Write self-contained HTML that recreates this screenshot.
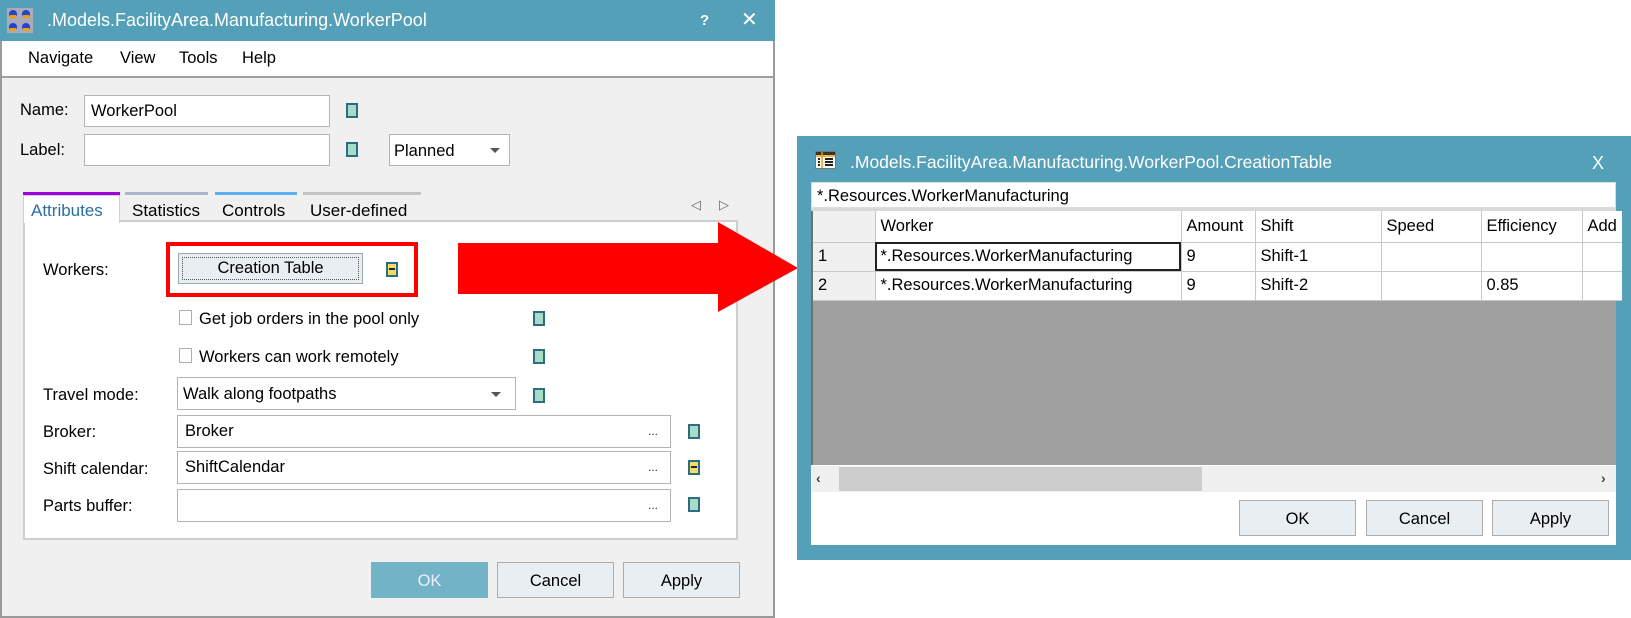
<!DOCTYPE html>
<html><head><meta charset="utf-8"><style>
*{box-sizing:border-box;margin:0;padding:0}
body{width:1631px;height:618px;background:#fff;position:relative;overflow:hidden;font-family:"Liberation Sans",sans-serif;font-size:16.5px;color:#000}
.a{position:absolute}
.t{position:absolute;white-space:nowrap;line-height:1}
.inp{position:absolute;background:#fff;border:1px solid #b4b4b4}
.sq{position:absolute;width:12px;height:15px;background:#a8dcc8;border:2px solid #2d6d80}
.sqy{position:absolute;width:12px;height:15px;background:#f4dc6a;border:2px solid #2d6d80}
.sqy:after{content:"";position:absolute;left:1px;top:4px;width:6px;height:2px;background:#223}
.btn{position:absolute;background:#e9eef2;border:1px solid #acacac;text-align:center;font-size:16.5px}
.cb{position:absolute;width:13px;height:15px;border:1px solid #adadad;background:#fff}
.dots{position:absolute;right:12px;top:8px;font-size:12px;color:#333}
.arr{position:absolute;width:0;height:0;border-left:5px solid transparent;border-right:5px solid transparent;border-top:5px solid #555}
td{border-right:1px solid #c8c8c8;border-bottom:1px solid #c8c8c8;padding:0 5px;font-size:16.5px;height:29px;white-space:nowrap;overflow:hidden}
</style></head><body>
<!-- left dialog -->
<div class="a" style="left:0;top:0;width:775px;height:618px;background:#f0f0f0;border:2px solid #9a9a9a;border-top:none"></div>
<div class="a" style="left:0;top:0;width:775px;height:41px;background:#55a0b9"></div>
<svg class="a" style="left:7px;top:8px" width="26" height="25"><rect width="26" height="25" fill="#aab"/><g fill="#2244cc"><circle cx="6" cy="6" r="4"/><circle cx="19" cy="6" r="4"/><circle cx="6" cy="19" r="4"/><circle cx="19" cy="19" r="4"/></g><g fill="#f0a000"><rect x="3" y="7" width="6" height="3"/><rect x="16" y="7" width="6" height="3"/><rect x="3" y="20" width="6" height="3"/><rect x="16" y="20" width="6" height="3"/></g></svg>
<div class="t" style="left:47px;top:11px;color:#fff;font-size:18px">.Models.FacilityArea.Manufacturing.WorkerPool</div>
<div class="t" style="left:700px;top:13px;color:#fff;font-size:15px;font-weight:bold">?</div>
<div class="t" style="left:741px;top:10px;color:#fff;font-size:20px">✕</div>
<div class="a" style="left:2px;top:41px;width:771px;height:37px;background:#fff;border-bottom:2px solid #a0a0a0"></div>
<div class="t" style="left:28px;top:50px">Navigate</div>
<div class="t" style="left:120px;top:50px">View</div>
<div class="t" style="left:179px;top:50px">Tools</div>
<div class="t" style="left:242px;top:50px">Help</div>

<div class="t" style="left:20px;top:102px">Name:</div>
<div class="inp" style="left:84px;top:95px;width:246px;height:32px"><span class="t" style="left:6px;top:7px">WorkerPool</span></div>
<div class="sq" style="left:346px;top:103px"></div>
<div class="t" style="left:20px;top:142px">Label:</div>
<div class="inp" style="left:84px;top:134px;width:246px;height:32px"></div>
<div class="sq" style="left:346px;top:142px"></div>
<div class="inp" style="left:389px;top:134px;width:121px;height:32px"><span class="t" style="left:4px;top:8px">Planned</span><div class="arr" style="left:100px;top:13px"></div></div>

<!-- tabs -->
<div class="a" style="left:23px;top:192px;width:97px;height:3px;background:#a000e0"></div>
<div class="a" style="left:125px;top:192px;width:83px;height:3px;background:#a8b8c8"></div>
<div class="a" style="left:215px;top:192px;width:82px;height:3px;background:#5ab0f0"></div>
<div class="a" style="left:303px;top:192px;width:118px;height:3px;background:#c4c4c4"></div>
<div class="a" style="left:23px;top:220px;width:715px;height:320px;background:#fff;border:2px solid #cfcfcf"></div>
<div class="a" style="left:23px;top:195px;width:97px;height:28px;background:#fff;border:1px solid #d0d0d0;border-bottom:none"></div>
<div class="t" style="left:31px;top:202px;color:#2a6fa0;font-size:17px">Attributes</div>
<div class="t" style="left:132px;top:202px;font-size:17px">Statistics</div>
<div class="t" style="left:222px;top:202px;font-size:17px">Controls</div>
<div class="t" style="left:310px;top:202px;font-size:17px">User-defined</div>
<div class="t" style="left:691px;top:198px;color:#666;font-size:13px">◁</div>
<div class="t" style="left:719px;top:198px;color:#666;font-size:13px">▷</div>

<div class="t" style="left:43px;top:262px">Workers:</div>
<div class="a" style="left:166px;top:242px;width:252px;height:55px;border:4px solid #f00"></div>
<div class="btn" style="left:178px;top:253px;width:185px;height:31px;border-color:#9aa;padding-top:5px"><div class="a" style="left:3px;top:3px;right:3px;bottom:3px;border:1px dotted #555"></div>Creation Table</div>
<div class="sqy" style="left:386px;top:262px"></div>

<div class="cb" style="left:179px;top:310px"></div>
<div class="t" style="left:199px;top:311px">Get job orders in the pool only</div>
<div class="sq" style="left:533px;top:311px"></div>
<div class="cb" style="left:179px;top:348px"></div>
<div class="t" style="left:199px;top:349px">Workers can work remotely</div>
<div class="sq" style="left:533px;top:349px"></div>

<div class="t" style="left:43px;top:387px">Travel mode:</div>
<div class="inp" style="left:177px;top:377px;width:339px;height:33px"><span class="t" style="left:5px;top:8px">Walk along footpaths</span><div class="arr" style="left:313px;top:14px"></div></div>
<div class="sq" style="left:533px;top:388px"></div>

<div class="t" style="left:43px;top:424px">Broker:</div>
<div class="inp" style="left:177px;top:415px;width:494px;height:33px"><span class="t" style="left:7px;top:7px">Broker</span><span class="dots">...</span></div>
<div class="sq" style="left:688px;top:424px"></div>
<div class="t" style="left:43px;top:461px">Shift calendar:</div>
<div class="inp" style="left:177px;top:451px;width:494px;height:33px"><span class="t" style="left:7px;top:7px">ShiftCalendar</span><span class="dots">...</span></div>
<div class="sqy" style="left:688px;top:460px"></div>
<div class="t" style="left:43px;top:498px">Parts buffer:</div>
<div class="inp" style="left:177px;top:489px;width:494px;height:33px"><span class="dots">...</span></div>
<div class="sq" style="left:688px;top:497px"></div>

<div class="btn" style="left:371px;top:562px;width:117px;height:36px;background:#72b3c8;border-color:#72b3c8;color:#eef;padding-top:9px">OK</div>
<div class="btn" style="left:497px;top:562px;width:117px;height:36px;padding-top:9px">Cancel</div>
<div class="btn" style="left:623px;top:562px;width:117px;height:36px;padding-top:9px">Apply</div>

<!-- red arrow -->
<svg class="a" style="left:455px;top:218px" width="345" height="96"><polygon points="3,25 263,25 263,4 343,50 263,94 263,76 3,76" fill="#f00"/></svg>

<!-- right dialog -->
<div class="a" style="left:797px;top:136px;width:834px;height:424px;background:#55a0b9"></div>
<svg class="a" style="left:815px;top:151px" width="21" height="18"><rect x=".5" y=".5" width="20" height="17" fill="#fff" stroke="#777"/><rect x="1" y="1" width="19" height="3" fill="#333"/><line x1="7" y1="1" x2="7" y2="17" stroke="#f0a000" stroke-width="1.5"/><line x1="1" y1="5" x2="20" y2="5" stroke="#f0a000" stroke-width="1.5"/><g fill="#222"><rect x="3" y="7" width="2" height="2"/><rect x="3" y="10" width="2" height="2"/><rect x="3" y="13" width="2" height="2"/><rect x="10" y="7" width="8" height="2"/><rect x="10" y="10" width="8" height="2"/><rect x="10" y="13" width="8" height="2"/></g></svg>
<div class="t" style="left:850px;top:154px;color:#fff;font-size:17.5px">.Models.FacilityArea.Manufacturing.WorkerPool.CreationTable</div>
<div class="t" style="left:1592px;top:154px;color:#fff;font-size:18px">X</div>
<div class="a" style="left:811px;top:182px;width:805px;height:363px;background:#fff"></div>
<div class="a" style="left:811px;top:182px;width:805px;height:26px;border:1px solid #ddd"><span class="t" style="left:5px;top:5px">*.Resources.WorkerManufacturing</span></div>
<div class="a" style="left:811px;top:208px;width:805px;height:3px;background:#d8d8d8"></div>
<div class="a" style="left:811px;top:211px;width:805px;height:254px;background:#a0a0a0;border-left:2px solid #707070"></div>
<table class="a" style="left:813px;top:211px;border-collapse:collapse;background:#fff;table-layout:fixed" >
<colgroup><col style="width:62px"><col style="width:306px"><col style="width:74px"><col style="width:126px"><col style="width:100px"><col style="width:101px"><col style="width:34px"></colgroup>
<tr><td style="background:#f0f0f0;height:31px"></td><td>Worker</td><td>Amount</td><td>Shift</td><td>Speed</td><td>Efficiency</td><td style="border-right:none">Add</td></tr>
<tr><td style="background:#f0f0f0">1</td><td style="outline:2px solid #222;outline-offset:-2px">*.Resources.WorkerManufacturing</td><td>9</td><td>Shift-1</td><td></td><td></td><td style="border-right:none"></td></tr>
<tr><td style="background:#f0f0f0">2</td><td>*.Resources.WorkerManufacturing</td><td>9</td><td>Shift-2</td><td></td><td>0.85</td><td style="border-right:none"></td></tr>
</table>
<div class="a" style="left:811px;top:466px;width:805px;height:26px;background:#f0f0f0"></div>
<div class="a" style="left:839px;top:467px;width:363px;height:24px;background:#cdcdcd"></div>
<div class="t" style="left:816px;top:471px;font-size:14px;color:#444;font-weight:bold">‹</div>
<div class="t" style="left:1601px;top:471px;font-size:14px;color:#444;font-weight:bold">›</div>
<div class="btn" style="left:1239px;top:500px;width:117px;height:36px;padding-top:9px">OK</div>
<div class="btn" style="left:1366px;top:500px;width:117px;height:36px;padding-top:9px">Cancel</div>
<div class="btn" style="left:1492px;top:500px;width:117px;height:36px;padding-top:9px">Apply</div>
</body></html>
